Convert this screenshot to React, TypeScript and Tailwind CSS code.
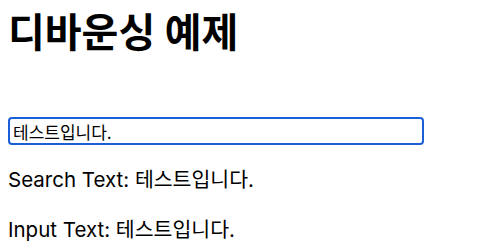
import { useState } from "react";

const font = { fontFamily: "Inter, 'Noto Sans CJK KR', sans-serif" };

export default function App() {
  const [text, setText] = useState("테스트입니다.");

  return (
    <div className="min-h-screen bg-white px-2 pt-[8px] text-black" style={font}>
      <h1 className="text-[40px] font-bold leading-[50px]">디바운싱 예제</h1>

      <input
        autoFocus
        value={text}
        onChange={(e) => setText(e.target.value)}
        className="mt-[59px] block h-[28px] w-[416px] rounded-[4px] border-2 border-[#1a5fd6] px-[3px] text-[17px] leading-none text-black outline-none"
      />

      <p className="mt-[23px] text-[20.5px] leading-[24px]">Search Text: {text}</p>
      <p className="mt-[26px] text-[20.5px] leading-[24px]">Input Text: {text}</p>
    </div>
  );
}
